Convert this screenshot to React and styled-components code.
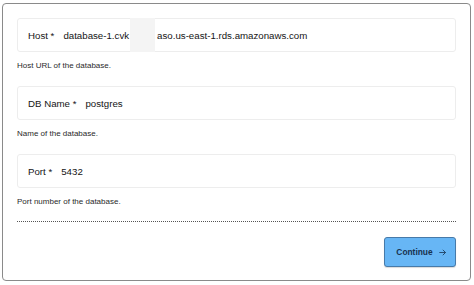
import React from "react";
import styled, { createGlobalStyle } from "styled-components";

const GlobalStyle = createGlobalStyle`
  html, body {
    margin: 0;
    padding: 0;
    background: #ffffff;
  }
  body {
    font-family: "Liberation Sans", Arial, sans-serif;
  }
`;

const Page = styled.div`
  padding: 3px 3px 4px 2px;
  width: 474px;
  height: 285px;
  box-sizing: border-box;
`;

const Card = styled.div`
  height: 100%;
  box-sizing: border-box;
  border: 1px solid #8a8a8a;
  border-radius: 4px;
  padding: 14px 14px 13px 14px;
  display: flex;
  flex-direction: column;
`;

const Field = styled.div`
  display: flex;
  flex-direction: column;
`;

const InputBox = styled.div`
  height: 34px;
  box-sizing: border-box;
  border: 1px solid #ededed;
  border-radius: 3px;
  display: flex;
  align-items: center;
  padding-left: 10px;
  font-size: 9.7px;
  color: #141414;
`;

const Label = styled.span`
  margin-right: 9px;
  white-space: nowrap;
`;

const Value = styled.span`
  display: flex;
  align-items: center;
  white-space: nowrap;
`;

const Redacted = styled.span`
  display: inline-block;
  width: 25px;
  height: 34px;
  margin: 0 2px 0 1px;
  background: #f4f4f4;
`;

const Help = styled.div`
  font-size: 8px;
  color: #2a2a2a;
  margin: 9px 0 15px 0;
  line-height: 10px;
`;

const Divider = styled.div`
  border-top: 1px dotted #555;
  margin-top: -1px;
`;

const Footer = styled.div`
  display: flex;
  justify-content: flex-end;
  margin-top: auto;
`;

const Button = styled.button`
  height: 30px;
  width: 72px;
  border: 1px solid #477aa9;
  border-radius: 3px;
  background: #67b6f5;
  color: #17324f;
  font-family: "Liberation Sans", Arial, sans-serif;
  font-weight: 700;
  font-size: 8.4px;
  display: flex;
  align-items: center;
  justify-content: center;
  gap: 6px;
  padding: 0 0 0 2px;
  box-shadow: 0 1px 1px rgba(0, 0, 0, 0.15);
`;

const Arrow = () => (
  <svg width="7" height="7" viewBox="0 0 7 7" fill="none" stroke="#17324f" strokeWidth="0.8">
    <path d="M0.3 3.5h6.2M3.8 0.8L6.5 3.5 3.8 6.2" />
  </svg>
);

const App = () => (
  <Page>
    <GlobalStyle />
    <Card>
      <Field>
        <InputBox>
          <Label>Host *</Label>
          <Value>
            database-1.cvk<Redacted />aso.us-east-1.rds.amazonaws.com
          </Value>
        </InputBox>
        <Help>Host URL of the database.</Help>
      </Field>
      <Field>
        <InputBox>
          <Label>DB Name *</Label>
          <Value>postgres</Value>
        </InputBox>
        <Help>Name of the database.</Help>
      </Field>
      <Field>
        <InputBox>
          <Label>Port *</Label>
          <Value>5432</Value>
        </InputBox>
        <Help>Port number of the database.</Help>
      </Field>
      <Divider />
      <Footer>
        <Button>
          Continue <Arrow />
        </Button>
      </Footer>
    </Card>
  </Page>
);

export default App;
